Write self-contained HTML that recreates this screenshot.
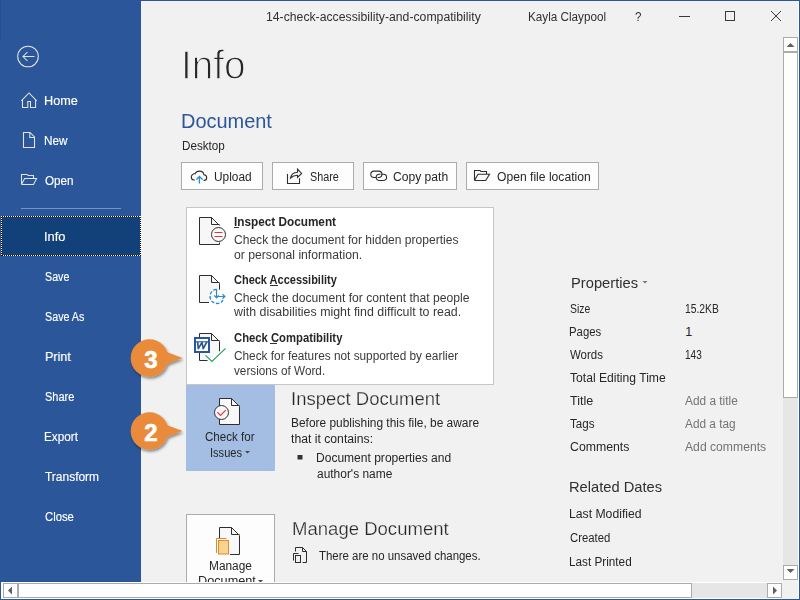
<!DOCTYPE html>
<html><head><meta charset="utf-8"><style>
html,body{margin:0;padding:0;}
body{width:800px;height:600px;position:relative;overflow:hidden;background:#f1f1f1;font-family:"Liberation Sans",sans-serif;}
.t{position:absolute;white-space:nowrap;line-height:1;transform-origin:0 0;}
.a{position:absolute;}
svg{position:absolute;overflow:visible;}
</style></head><body>
<!-- window border -->
<div class="a" style="left:0;top:0;width:800px;height:1px;background:#2b579a"></div>
<!-- sidebar -->
<div class="a" style="left:0;top:0;width:141px;height:582px;background:#2b579a"></div>
<div class="a" style="left:0;top:0;width:1px;height:41px;background:#28508c"></div>
<div class="a" style="left:21px;top:208px;width:100px;height:1px;background:#7394c6"></div>
<div class="a" style="left:1px;top:216px;width:140px;height:40px;background:#124078"></div>
<div class="a" style="left:1px;top:216px;width:140px;height:1px;background:repeating-linear-gradient(90deg,#fff 0 1px,#000 1px 2px)"></div>
<div class="a" style="left:1px;top:255px;width:140px;height:1px;background:repeating-linear-gradient(90deg,#fff 0 1px,#000 1px 2px)"></div>
<div class="a" style="left:1px;top:216px;width:1px;height:40px;background:repeating-linear-gradient(180deg,#fff 0 1px,#000 1px 2px)"></div>
<div class="a" style="left:140px;top:216px;width:1px;height:40px;background:repeating-linear-gradient(180deg,#fff 0 1px,#000 1px 2px)"></div>
<!-- sidebar icons -->
<svg style="left:0;top:0" width="141" height="200" viewBox="0 0 141 200" fill="none" stroke="#e4e4e4" stroke-width="1.05">
  <circle cx="28" cy="56.5" r="10.3"/>
  <path d="M23 56.5 H34.5 M27.5 52 L23 56.5 L27.5 61"/>
  <path d="M21.3 100.8 L29 93 L36.7 100.8"/>
  <path d="M22.5 100 V107.5 H27.8 V101.5 H30.5 V107.5 H35.6 V100"/>
  <path d="M23.5 132.5 H30 L34.5 137 V147.5 H23.5 Z M29.8 132.5 V137.5 H34.5"/>
  <path d="M21.5 184.5 V174.5 H27.2 L28.2 175.5 H33.5 V178.5 M21.5 184.5 H33.5 L36.6 178.5 H24.6 L21.5 184.5"/>
</svg>
<!-- title bar controls -->
<svg style="left:0;top:0" width="800" height="36" viewBox="0 0 800 36" fill="none" stroke="#3a3a3a" stroke-width="1">
  <path d="M679 16.5 H690"/>
  <rect x="725.5" y="11.5" width="9" height="9"/>
  <path d="M771 11 L781 21 M781 11 L771 21"/>
</svg>
<!-- action buttons -->
<div class="a" style="left:181px;top:162px;width:82px;height:28px;box-sizing:border-box;border:1px solid #ababab;background:#fdfdfd"></div>
<div class="a" style="left:272px;top:162px;width:82px;height:28px;box-sizing:border-box;border:1px solid #ababab;background:#fdfdfd"></div>
<div class="a" style="left:363px;top:162px;width:94px;height:28px;box-sizing:border-box;border:1px solid #ababab;background:#fdfdfd"></div>
<div class="a" style="left:466px;top:162px;width:133px;height:28px;box-sizing:border-box;border:1px solid #ababab;background:#fdfdfd"></div>
<svg style="left:0;top:0" width="800" height="200" viewBox="0 0 800 200" fill="none" stroke="#2e2e2e" stroke-width="1.1">
  <!-- cloud -->
  <path d="M194.8 180 H194 C192.3 180 191.3 178.6 191.3 177 C191.3 175.1 193 173.6 195 173.8 C195.8 172 197.5 171.1 199.5 171.1 C202 171.1 203.6 172.8 203.9 174.8 C205.5 174.9 206.7 176.2 206.7 177.7 C206.7 179.2 205.5 180.4 204 180.4 H203.6"/>
  <path d="M199.4 183.6 V176.6 M196.3 179.6 L199.4 176.5 L202.6 179.6" stroke="#2a8ad4" stroke-width="1.3"/>
  <!-- share -->
  <path d="M287.5 174 V183.5 H299.5 V178.2"/>
  <path d="M290.5 178 C291 174.5 293.5 172.5 297.5 172.2 V169.2 L301.6 173.4 L297.5 177.4 V175.3 C294 175.3 292 176.5 290.5 178 Z"/>
  <!-- link -->
  <path d="M376 177.5 H374 A3.2 3.2 0 0 1 374 171.1 H378.7 A3.2 3.2 0 0 1 378.7 177.5 H377.5"/>
  <path d="M381.5 174.3 H383.5 A3.1 3.1 0 0 1 383.5 180.5 H379.3 A3.1 3.1 0 0 1 379.3 174.3 H380.5"/>
  <!-- folder -->
  <path d="M474.5 180.5 V170.5 H480 L481 171.5 H486.5 V174.3 M474.5 180.5 H485.7 L489.5 174.3 H478 L474.5 180.5"/>
</svg>
<!-- check for issues button -->
<div class="a" style="left:186px;top:385px;width:89px;height:86px;background:#a3bde3"></div>
<!-- manage document button -->
<div class="a" style="left:186px;top:514px;width:89px;height:80px;box-sizing:border-box;border:1px solid #ababab;background:#fdfdfd"></div>
<!-- popup -->
<div class="a" style="left:186px;top:207px;width:308px;height:178px;box-sizing:border-box;border:1px solid #c6c6c6;background:#fff"></div>
<svg style="left:0;top:0" width="800" height="600" viewBox="0 0 800 600" fill="none" stroke="#2e2e2e" stroke-width="1">
  <!-- inspect doc icon -->
  <path d="M219.5 242.5 V244.5 H199.5 V217.5 H211.5 L219.5 225.5" fill="#f7f7f7"/>
  <path d="M211.5 217.5 V224.5 H219.5" fill="none"/>
  <circle cx="218.5" cy="234.5" r="7" fill="#fafafa"/>
  <path d="M214.5 232.5 H222.5 M214.5 236.5 H222.5" stroke="#e8303a" stroke-width="1"/>
  <!-- accessibility icon -->
  <path d="M209 302.5 H199.5 V275.5 H211.5 L219.5 283.5 V289.7" fill="#f7f7f7"/>
  <path d="M211.5 275.5 V282.5 H219.5" fill="none"/>
  <path d="M216.6 289.3 A7.1 7.1 0 1 0 223.1 300.2" stroke="#2088d8" stroke-width="1.3" stroke-dasharray="3.4 1.7" fill="#fff"/>
  <path d="M216.5 289 V297.5 M214.2 295.3 L216.5 297.8 L218.8 295.3 M216.5 296.5 H224.8 M222.5 294.2 L224.9 296.5 L222.5 298.8" stroke="#2a8ad4" stroke-width="1.2"/>
  <!-- compatibility icon -->
  <path d="M207.5 360.5 H199.5 V333.5 H211.5 L219.5 341.5 V351.3" fill="#f7f7f7"/>
  <path d="M211.5 333.5 V340.5 H219.5" fill="none"/>
  <rect x="195" y="338" width="14" height="14" stroke="#2b579a" stroke-width="2" fill="#fff"/>
  <path d="M196 341.8 H208" stroke="#2b579a" stroke-width="1.1"/>
  <path d="M197.6 341.8 L198.3 348.6 L202 342.4 L203.2 348.6 L206.9 341.8" stroke="#2b579a" stroke-width="1.7" stroke-linejoin="round"/>
  <path d="M205.5 355.4 L211.9 361.5 L225.6 348.4" stroke="#21a656" stroke-width="1.2"/>
  <!-- check for issues icon -->
  <path d="M219.5 398.5 H231.5 L239.5 406.5 V424.5 H219.5 Z" fill="#f8f8f8"/>
  <path d="M231.5 398.5 V405.5 H239.5" fill="none"/>
  <circle cx="221.5" cy="412.5" r="7" fill="#f8f8f8"/>
  <path d="M217.3 412.2 L220.5 415.5 L225.8 410.2" stroke="#e8303a" stroke-width="1.1"/>
  <path d="M245 451 L250 451 L247.5 453.5 Z" fill="#444" stroke="none"/>
  <!-- manage doc icon -->
  <path d="M230 554.5 H239.5 V535.5 L231.5 527.5 H219.5 V538" fill="#f8f8f8"/>
  <path d="M231.5 527.5 V534.5 H239.5" fill="none"/>
  <path d="M216.5 553 V538.5 H226.5" stroke="#e8862e" stroke-width="1"/>
  <rect x="218.5" y="540.5" width="10" height="13.5" fill="#f6d68e" stroke="#e8862e" stroke-width="1"/>
  <path d="M258 580 L263 580 L260.5 582.5 Z" fill="#444" stroke="none"/>
  <!-- manage doc small icon -->
  <path d="M295.5 551.5 V547.5 H302.5 L306.5 551.5 V562.5 H302.5 M302.5 547.5 V551.5 H306.5 M293.5 560.5 V553.5 H298.5" stroke="#2e2e2e" stroke-width="1"/>
  <rect x="295.5" y="555.5" width="5" height="7" stroke="#2e2e2e" stroke-width="1"/>
  <!-- bullet -->
  <rect x="297.5" y="455" width="5" height="4.5" fill="#333" stroke="none"/>
  <!-- properties arrow -->
  <path d="M642.5 281 L647.5 281 L645 283.5 Z" fill="#777" stroke="none"/>
</svg>
<!-- popup underlines -->
<div class="a" style="left:233.5px;top:227px;width:5px;height:1px;background:#333"></div>
<div class="a" style="left:270px;top:285px;width:8px;height:1px;background:#333"></div>
<div class="a" style="left:270px;top:343px;width:7px;height:1px;background:#333"></div>

<div class="t" id="t0" style="left:266.25px;top:10.94px;font-size:12px;font-weight:400;color:#303030;transform:scaleX(1.0191);">14-check-accessibility-and-compatibility</div>
<div class="t" id="t1" style="left:528.00px;top:10.84px;font-size:12px;font-weight:400;color:#303030;transform:scaleX(0.9747);">Kayla Claypool</div>
<div class="t" id="t2" style="left:635.00px;top:9.57px;font-size:13.5px;font-weight:400;color:#303030;transform:scaleX(0.8571);">?</div>
<div class="t" id="t3" style="left:44.00px;top:95.42px;font-size:12.5px;font-weight:400;color:#ffffff;transform:scaleX(1.0148);-webkit-text-stroke:0.15px #fff;">Home</div>
<div class="t" id="t4" style="left:44.00px;top:135.42px;font-size:12.5px;font-weight:400;color:#ffffff;transform:scaleX(0.9401);-webkit-text-stroke:0.15px #fff;">New</div>
<div class="t" id="t5" style="left:45.00px;top:174.82px;font-size:12.5px;font-weight:400;color:#ffffff;transform:scaleX(0.9333);-webkit-text-stroke:0.15px #fff;">Open</div>
<div class="t" id="t6" style="left:44.00px;top:231.42px;font-size:12.5px;font-weight:400;color:#ffffff;transform:scaleX(1.0259);-webkit-text-stroke:0.15px #fff;">Info</div>
<div class="t" id="t7" style="left:45.00px;top:271.42px;font-size:12.5px;font-weight:400;color:#ffffff;transform:scaleX(0.8571);-webkit-text-stroke:0.15px #fff;">Save</div>
<div class="t" id="t8" style="left:45.00px;top:311.42px;font-size:12.5px;font-weight:400;color:#ffffff;transform:scaleX(0.8593);-webkit-text-stroke:0.15px #fff;">Save As</div>
<div class="t" id="t9" style="left:45.00px;top:351.42px;font-size:12.5px;font-weight:400;color:#ffffff;-webkit-text-stroke:0.15px #fff;">Print</div>
<div class="t" id="t10" style="left:45.00px;top:391.42px;font-size:12.5px;font-weight:400;color:#ffffff;transform:scaleX(0.8788);-webkit-text-stroke:0.15px #fff;">Share</div>
<div class="t" id="t11" style="left:44.00px;top:431.42px;font-size:12.5px;font-weight:400;color:#ffffff;transform:scaleX(0.9386);-webkit-text-stroke:0.15px #fff;">Export</div>
<div class="t" id="t12" style="left:45.00px;top:471.42px;font-size:12.5px;font-weight:400;color:#ffffff;transform:scaleX(0.9571);-webkit-text-stroke:0.15px #fff;">Transform</div>
<div class="t" id="t13" style="left:45.00px;top:511.42px;font-size:12.5px;font-weight:400;color:#ffffff;transform:scaleX(0.9043);-webkit-text-stroke:0.15px #fff;">Close</div>
<div class="t" id="t14" style="left:181.00px;top:44.47px;font-size:41.5px;font-weight:400;color:#262626;transform:scaleX(0.9329);-webkit-text-stroke:1.3px #f1f1f1;">Info</div>
<div class="t" id="t15" style="left:181.00px;top:112.49px;font-size:19.5px;font-weight:400;color:#2b579a;transform:scaleX(1.0227);">Document</div>
<div class="t" id="t16" style="left:181.50px;top:140.42px;font-size:12.5px;font-weight:400;color:#262626;transform:scaleX(0.9346);">Desktop</div>
<div class="t" id="t17" style="left:213.50px;top:170.84px;font-size:12px;font-weight:400;color:#262626;transform:scaleX(0.9883);">Upload</div>
<div class="t" id="t18" style="left:309.50px;top:170.84px;font-size:12px;font-weight:400;color:#262626;transform:scaleX(0.8986);">Share</div>
<div class="t" id="t19" style="left:392.80px;top:170.84px;font-size:12px;font-weight:400;color:#262626;transform:scaleX(1.0082);">Copy path</div>
<div class="t" id="t20" style="left:496.50px;top:170.84px;font-size:12px;font-weight:400;color:#262626;transform:scaleX(1.0109);">Open file location</div>
<div class="t" id="t21" style="left:233.80px;top:216.09px;font-size:12px;font-weight:700;color:#262626;transform:scaleX(0.9808);">Inspect Document</div>
<div class="t" id="t22" style="left:233.80px;top:234.24px;font-size:12px;font-weight:400;color:#3a3a3a;transform:scaleX(1.0045);">Check the document for hidden properties</div>
<div class="t" id="t23" style="left:233.80px;top:248.84px;font-size:12px;font-weight:400;color:#3a3a3a;transform:scaleX(1.0160);">or personal information.</div>
<div class="t" id="t24" style="left:233.80px;top:273.84px;font-size:12px;font-weight:700;color:#262626;transform:scaleX(0.9154);">Check Accessibility</div>
<div class="t" id="t25" style="left:233.80px;top:291.84px;font-size:12px;font-weight:400;color:#3a3a3a;transform:scaleX(1.0113);">Check the document for content that people</div>
<div class="t" id="t26" style="left:233.80px;top:306.34px;font-size:12px;font-weight:400;color:#3a3a3a;transform:scaleX(1.0333);">with disabilities might find difficult to read.</div>
<div class="t" id="t27" style="left:233.80px;top:332.04px;font-size:12px;font-weight:700;color:#262626;transform:scaleX(0.9397);">Check Compatibility</div>
<div class="t" id="t28" style="left:233.80px;top:349.84px;font-size:12px;font-weight:400;color:#3a3a3a;transform:scaleX(0.9855);">Check for features not supported by earlier</div>
<div class="t" id="t29" style="left:233.80px;top:364.84px;font-size:12px;font-weight:400;color:#3a3a3a;transform:scaleX(0.9785);">versions of Word.</div>
<div class="t" id="t30" style="left:205.00px;top:431.22px;font-size:12.5px;font-weight:400;color:#262626;transform:scaleX(0.9259);">Check for</div>
<div class="t" id="t31" style="left:209.60px;top:447.12px;font-size:12.5px;font-weight:400;color:#262626;transform:scaleX(0.8857);">Issues</div>
<div class="t" id="t32" style="left:209.00px;top:560.17px;font-size:12.5px;font-weight:400;color:#262626;transform:scaleX(0.9489);">Manage</div>
<div class="t" id="t33" style="left:198.00px;top:574.92px;font-size:12.5px;font-weight:400;color:#262626;transform:scaleX(1.0154);">Document</div>
<div class="t" id="t34" style="left:291.00px;top:390.69px;font-size:17.5px;font-weight:400;color:#262626;transform:scaleX(1.0571);-webkit-text-stroke:0.25px #f1f1f1;">Inspect Document</div>
<div class="t" id="t35" style="left:291.40px;top:416.92px;font-size:12.5px;font-weight:400;color:#262626;transform:scaleX(0.9529);">Before publishing this file, be aware</div>
<div class="t" id="t36" style="left:291.40px;top:433.42px;font-size:12.5px;font-weight:400;color:#262626;transform:scaleX(0.9759);">that it contains:</div>
<div class="t" id="t37" style="left:316.00px;top:452.42px;font-size:12.5px;font-weight:400;color:#262626;transform:scaleX(0.9626);">Document properties and</div>
<div class="t" id="t38" style="left:317.00px;top:468.42px;font-size:12.5px;font-weight:400;color:#262626;transform:scaleX(0.9556);">author's name</div>
<div class="t" id="t39" style="left:292.00px;top:521.19px;font-size:17.5px;font-weight:400;color:#262626;transform:scaleX(1.0596);-webkit-text-stroke:0.25px #f1f1f1;">Manage Document</div>
<div class="t" id="t40" style="left:318.50px;top:550.42px;font-size:12.5px;font-weight:400;color:#262626;transform:scaleX(0.9158);">There are no unsaved changes.</div>
<div class="t" id="t41" style="left:570.60px;top:276.15px;font-size:14px;font-weight:400;color:#303030;transform:scaleX(1.0512);">Properties</div>
<div class="t" id="t42" style="left:570.00px;top:302.72px;font-size:12.5px;font-weight:400;color:#262626;transform:scaleX(0.8333);">Size</div>
<div class="t" id="t43" style="left:569.00px;top:326.42px;font-size:12.5px;font-weight:400;color:#262626;transform:scaleX(0.9084);">Pages</div>
<div class="t" id="t44" style="left:570.00px;top:349.42px;font-size:12.5px;font-weight:400;color:#262626;transform:scaleX(0.9167);">Words</div>
<div class="t" id="t45" style="left:570.00px;top:372.12px;font-size:12.5px;font-weight:400;color:#262626;transform:scaleX(0.9697);">Total Editing Time</div>
<div class="t" id="t46" style="left:570.00px;top:395.42px;font-size:12.5px;font-weight:400;color:#262626;transform:scaleX(1.0038);">Title</div>
<div class="t" id="t47" style="left:570.00px;top:418.12px;font-size:12.5px;font-weight:400;color:#262626;transform:scaleX(0.9275);">Tags</div>
<div class="t" id="t48" style="left:570.00px;top:441.12px;font-size:12.5px;font-weight:400;color:#262626;transform:scaleX(0.9833);">Comments</div>
<div class="t" id="t49" style="left:685.20px;top:302.72px;font-size:12.5px;font-weight:400;color:#262626;transform:scaleX(0.8257);">15.2KB</div>
<div class="t" id="t50" style="left:685.20px;top:326.42px;font-size:12.5px;font-weight:400;color:#262626;">1</div>
<div class="t" id="t51" style="left:685.20px;top:349.42px;font-size:12.5px;font-weight:400;color:#262626;transform:scaleX(0.8028);">143</div>
<div class="t" id="t52" style="left:685.20px;top:395.42px;font-size:12.5px;font-weight:400;color:#737373;transform:scaleX(0.9485);">Add a title</div>
<div class="t" id="t53" style="left:685.20px;top:418.12px;font-size:12.5px;font-weight:400;color:#737373;transform:scaleX(0.9448);">Add a tag</div>
<div class="t" id="t54" style="left:685.20px;top:441.12px;font-size:12.5px;font-weight:400;color:#737373;transform:scaleX(0.9730);">Add comments</div>
<div class="t" id="t55" style="left:569.00px;top:480.23px;font-size:14.5px;font-weight:400;color:#303030;transform:scaleX(1.0122);">Related Dates</div>
<div class="t" id="t56" style="left:569.00px;top:508.42px;font-size:12.5px;font-weight:400;color:#262626;transform:scaleX(0.9762);">Last Modified</div>
<div class="t" id="t57" style="left:570.00px;top:532.42px;font-size:12.5px;font-weight:400;color:#262626;transform:scaleX(0.9079);">Created</div>
<div class="t" id="t58" style="left:569.00px;top:556.12px;font-size:12.5px;font-weight:400;color:#262626;transform:scaleX(0.9396);">Last Printed</div>
<!-- horizontal scrollbar -->
<div class="a" style="left:1px;top:582px;width:798px;height:17px;background:#fff"></div>
<div class="a" style="left:3px;top:583px;width:15px;height:15px;box-sizing:border-box;border:1px solid #ababab;background:#fff"></div>
<div class="a" style="left:17px;top:583px;width:675px;height:15px;box-sizing:border-box;border:1px solid #ababab;border-left-width:2px;background:#fff"></div>
<div class="a" style="left:692px;top:583px;width:75px;height:15px;background:#e6e6e6"></div>
<div class="a" style="left:767px;top:583px;width:15px;height:15px;box-sizing:border-box;border:1px solid #ababab;background:#fff"></div>
<div class="a" style="left:782px;top:580px;width:17px;height:19px;background:#f1f1f1"></div>
<!-- vertical scrollbar -->
<div class="a" style="left:798px;top:1px;width:1px;height:598px;background:#fff"></div>
<div class="a" style="left:783px;top:37px;width:15px;height:15px;box-sizing:border-box;border:1px solid #ababab;background:#fff"></div>
<div class="a" style="left:783px;top:51px;width:15px;height:347px;box-sizing:border-box;border:1px solid #ababab;border-top-width:2px;background:#fff"></div>
<div class="a" style="left:783px;top:398px;width:15px;height:167px;background:#e6e6e6"></div>
<div class="a" style="left:783px;top:565px;width:15px;height:15px;box-sizing:border-box;border:1px solid #ababab;background:#fff"></div>
<svg style="left:0;top:0" width="800" height="600" viewBox="0 0 800 600" stroke="none" fill="#606060">
  <path d="M786.5 47 H794.5 L790.5 43 Z"/>
  <path d="M786.5 569 H794.5 L790.5 573 Z"/>
  <path d="M12 586.5 V594.5 L8 590.5 Z"/>
  <path d="M773 586.5 V594.5 L777 590.5 Z"/>
</svg>
<!-- window border -->
<div class="a" style="left:799px;top:0;width:1px;height:600px;background:#2b579a"></div>
<div class="a" style="left:0;top:599px;width:800px;height:1px;background:#2b579a"></div>
<div class="a" style="left:0;top:582px;width:1px;height:18px;background:#2b579a"></div>
<!-- callouts -->
<svg style="left:0;top:0" width="800" height="600" viewBox="0 0 800 600">
  <defs><filter id="sh" x="-30%" y="-30%" width="160%" height="160%"><feGaussianBlur in="SourceAlpha" stdDeviation="1.5"/><feOffset dx="1" dy="2"/><feComponentTransfer><feFuncA type="linear" slope="0.45"/></feComponentTransfer><feMerge><feMergeNode/><feMergeNode in="SourceGraphic"/></feMerge></filter></defs>
  <g filter="url(#sh)" fill="#ea8b3a">
    <circle cx="149.5" cy="358" r="18.8"/>
    <path d="M164 351 L182.5 358 L164 365 Z"/>
    <circle cx="149.5" cy="431" r="18.8"/>
    <path d="M164 424 L182.5 431 L164 438 Z"/>
  </g>
</svg>
<div class="a" style="left:141px;top:347.5px;width:20px;text-align:center;font:bold 24px/24px 'Liberation Sans',sans-serif;color:#fff;-webkit-text-stroke:0.6px #fff">3</div>
<div class="a" style="left:141px;top:420.5px;width:20px;text-align:center;font:bold 24px/24px 'Liberation Sans',sans-serif;color:#fff;-webkit-text-stroke:0.6px #fff">2</div>

</body></html>
